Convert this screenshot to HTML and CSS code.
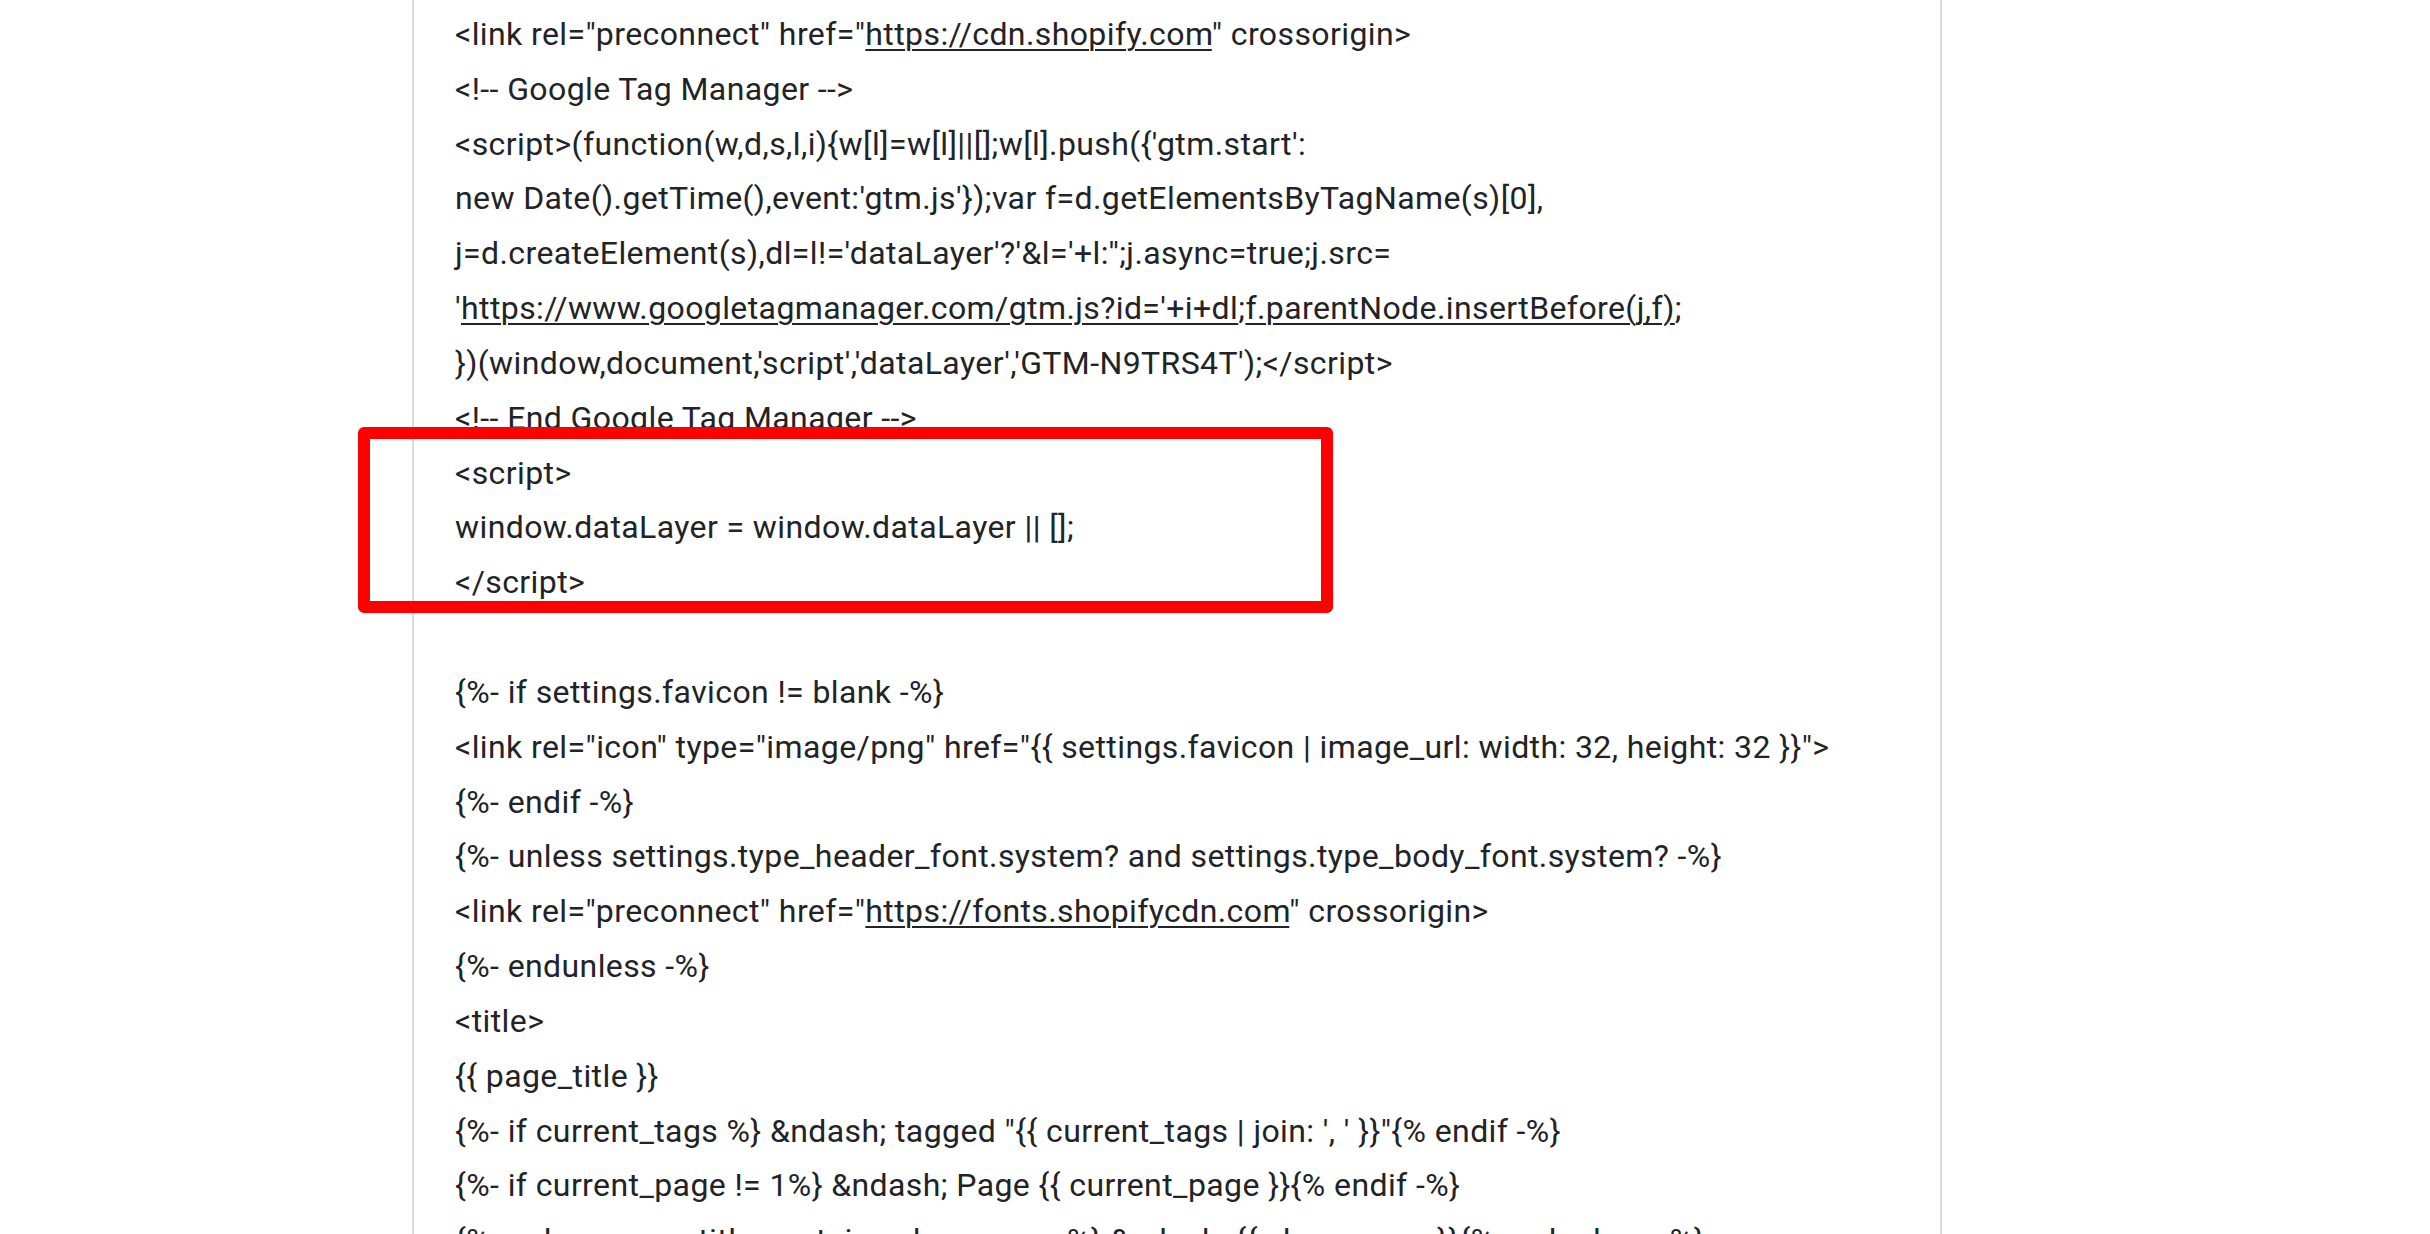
FILE: index.html
```html
<!DOCTYPE html>
<html lang="en">
<head>
<meta charset="utf-8">
<title>theme.liquid</title>
<link rel="stylesheet" href="styles.css">
</head>
<body>
<div class="page">
	<div class="side"></div>
	<div class="doc">
		<div class="code">
			<p>&lt;link rel="preconnect" href="<a href="#">https://cdn.shopify.com</a>" crossorigin&gt;</p>
			<p>&lt;!-- Google Tag Manager --&gt;</p>
			<p>&lt;script&gt;(function(w,d,s,l,i){w[l]=w[l]||[];w[l].push({'gtm.start':</p>
			<p>new Date().getTime(),event:'gtm.js'});var f=d.getElementsByTagName(s)[0],</p>
			<p>j=d.createElement(s),dl=l!='dataLayer'?'&amp;l='+l:'';j.async=true;j.src=</p>
			<p>'<a href="#">https://www.googletagmanager.com/gtm.js?id='+i+dl</a>;<a href="#">f.parentNode.insertBefore(j,f)</a>;</p>
			<p>})(window,document,'script','dataLayer','GTM-N9TRS4T');&lt;/script&gt;</p>
			<p>&lt;!-- End Google Tag Manager --&gt;</p>
			<p>&lt;script&gt;</p>
			<p>window.dataLayer = window.dataLayer || [];</p>
			<p>&lt;/script&gt;</p>
			<p class="blank"></p>
			<p>{%- if settings.favicon != blank -%}</p>
			<p>&lt;link rel="icon" type="image/png" href="{{ settings.favicon | image_url: width: 32, height: 32 }}"&gt;</p>
			<p>{%- endif -%}</p>
			<p>{%- unless settings.type_header_font.system? and settings.type_body_font.system? -%}</p>
			<p>&lt;link rel="preconnect" href="<a href="#">https://fonts.shopifycdn.com</a>" crossorigin&gt;</p>
			<p>{%- endunless -%}</p>
			<p>&lt;title&gt;</p>
			<p>{{ page_title }}</p>
			<p>{%- if current_tags %} &amp;ndash; tagged "{{ current_tags | join: ', ' }}"{% endif -%}</p>
			<p>{%- if current_page != 1%} &amp;ndash; Page {{ current_page }}{% endif -%}</p>
			<p>{%- unless page_title contains shop.name %} &amp;ndash; {{ shop.name }}{% endunless -%}</p>
		</div>
		<div class="mark"></div>
	</div>
</div>
</body>
</html>
```

FILE: styles.css
```css
*{box-sizing: border-box;}
html, body{
	margin: 0;
	height: 100%;
	overflow: hidden;
	background: #fff;
}
body{
	font-family: Roboto, 'Liberation Sans', sans-serif;
	font-size: 32px;
	letter-spacing: .4px;
	color: #222326;
}
.page{
	display: flex;
	height: 100%;
}
.side{
	width: 412px;
	flex: none;
}
.doc{
	position: relative;
	width: 1530px;
	flex: none;
	border-left: 2px solid #dadada;
	border-right: 2px solid #dadada;
	padding: 7px 0 0 41px;
}
.code p{
	margin: 0;
	height: 54.83px;
	line-height: 54.83px;
	white-space: nowrap;
}
.code a{
	color: inherit;
	text-decoration: underline;
	text-decoration-thickness: 2px;
	text-underline-offset: 4px;
}

/* highlight drawn over the text */
.mark{
	position: absolute;
	left: -56px;
	top: 427px;
	width: 975px;
	height: 186px;
	border: 12px solid #fe0000;
	border-radius: 6px;
}
```
